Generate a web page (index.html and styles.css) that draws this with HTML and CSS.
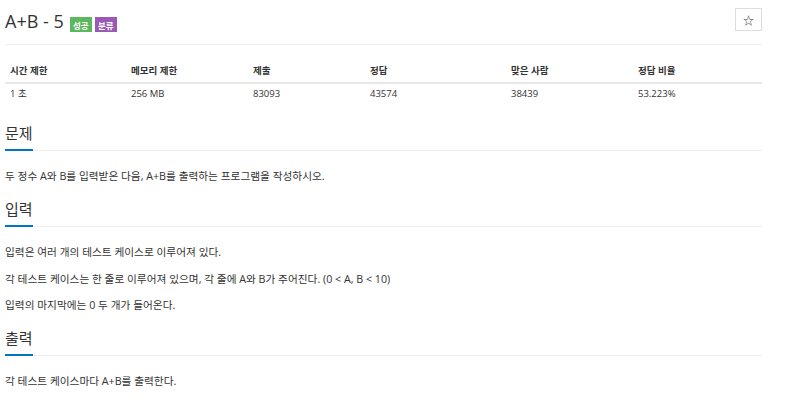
FILE: index.html
```html
<!DOCTYPE html>
<html lang="ko">
<head>
<meta charset="utf-8">
<link rel="stylesheet" href="styles.css">
</head>
<body>
<div class="page">
  <div class="title-row">
    <div class="title-left">
      <span class="title">A+B - 5</span>
      <span class="badge badge-green">성공</span>
      <span class="badge badge-purple">분류</span>
    </div>
    <div class="star-btn">☆</div>
  </div>

  <div class="info-table">
    <div class="cell th">시간 제한</div>
    <div class="cell th">메모리 제한</div>
    <div class="cell th">제출</div>
    <div class="cell th">정답</div>
    <div class="cell th">맞은 사람</div>
    <div class="cell th">정답 비율</div>
    <div class="cell td">1 초</div>
    <div class="cell td">256 MB</div>
    <div class="cell td">83093</div>
    <div class="cell td">43574</div>
    <div class="cell td">38439</div>
    <div class="cell td">53.223%</div>
  </div>

  <section class="section first">
    <div class="sec-head"><span class="sec-title">문제</span></div>
    <p>두 정수 A와 B를 입력받은 다음, A+B를 출력하는 프로그램을 작성하시오.</p>
  </section>

  <section class="section">
    <div class="sec-head"><span class="sec-title">입력</span></div>
    <p>입력은 여러 개의 테스트 케이스로 이루어져 있다.</p>
    <p>각 테스트 케이스는 한 줄로 이루어져 있으며, 각 줄에 A와 B가 주어진다. (0 &lt; A, B &lt; 10)</p>
    <p>입력의 마지막에는 0 두 개가 들어온다.</p>
  </section>

  <section class="section">
    <div class="sec-head"><span class="sec-title">출력</span></div>
    <p>각 테스트 케이스마다 A+B를 출력한다.</p>
  </section>
</div>
</body>
</html>
```
FILE: styles.css
```css
html, body {
  margin: 0;
  padding: 0;
  background: #fff;
}
body {
  font-family: "Open Sans", "Noto Sans CJK KR", sans-serif;
  color: #333;
}
.page {
  margin-left: 5px;
  width: 757px;
}
.title-row {
  height: 44px;
  border-bottom: 1px solid #eee;
  display: flex;
  justify-content: space-between;
  align-items: flex-start;
}
.title-left {
  display: flex;
  align-items: center;
  height: 44px;
}
.title {
  font-size: 18px;
  line-height: 24px;
  margin-right: 6px;
  margin-top: -2px;
}
.badge {
  display: inline-flex;
  align-items: center;
  justify-content: center;
  width: 22px;
  height: 15px;
  font-size: 8.5px;
  font-weight: bold;
  color: #fff;
  margin-right: 3px;
  margin-top: 5px;
  font-family: "Noto Sans CJK KR", sans-serif;
}
.badge-green { background: #5cb85c; }
.badge-purple { background: #9b59b6; }
.star-btn {
  margin-top: 8px;
  width: 25px;
  height: 21px;
  border: 1px solid #ddd;
  display: flex;
  align-items: center;
  justify-content: center;
  font-size: 11px;
  color: #333;
}
.info-table {
  margin-top: 15px;
  display: grid;
  grid-template-columns: 121px 122px 117px 141px 127px 129px;
}
.cell {
  padding-left: 5px;
  font-size: 9.5px;
}
.th {
  font-weight: bold;
  height: 22px;
  line-height: 22px;
  border-bottom: 2px solid #e8e8e8;
}
.td {
  height: 20px;
  line-height: 20px;
}
.section {
  margin-top: 10px;
}
.section.first {
  margin-top: 14px;
}
.sec-head {
  height: 32px;
  border-bottom: 1px solid #eee;
}
.sec-title {
  display: inline-block;
  height: 31px;
  line-height: 30px;
  font-size: 15px;
  border-bottom: 2px solid #0076c0;
}
.section p {
  margin: 0;
  font-size: 10.7px;
  line-height: 16px;
}
.sec-head + p {
  margin-top: 17px;
}
.section p + p {
  margin-top: 10.5px;
}
```
